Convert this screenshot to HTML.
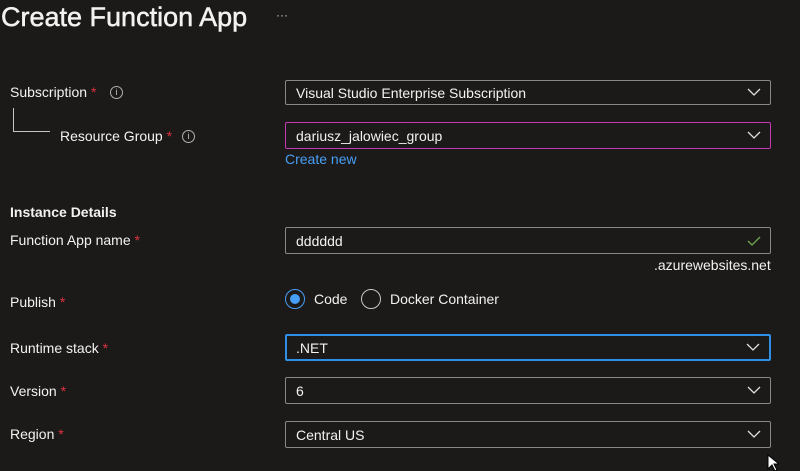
<!DOCTYPE html>
<html><head><style>
body{margin:0;width:800px;height:471px;background:#1b1a19;color:#f3f2f1;font-family:"Liberation Sans",sans-serif;font-size:14px;position:relative;overflow:hidden}
.a{position:absolute;white-space:nowrap}
.r{color:#e0313e}
.box{position:absolute;left:285px;width:486px;border:1px solid #8a8886;border-radius:2px;box-sizing:border-box}
.box span{position:absolute;left:10px;top:50%;transform:translateY(-50%)}
.chev{position:absolute;right:9px;top:50%;margin-top:-5px}
.info{position:absolute;width:11px;height:11px;border:1px solid #b3b0ad;border-radius:50%;font-size:9px;text-align:center;line-height:11px;color:#c8c6c4}
</style></head><body>
<div class="a" style="left:1px;top:2px;font-size:27px;-webkit-text-stroke:0.5px #f3f2f1">Create Function App</div>
<div class="a" style="left:276px;top:8px;font-size:12px;color:#c8c6c4">···</div>

<div class="a" style="left:10px;top:84px">Subscription <span class="r">*</span></div>
<div class="info" style="left:110px;top:86px">i</div>
<div class="a" style="left:13px;top:108px;width:36px;height:23px;border-left:1px solid #c8c6c4;border-bottom:1px solid #c8c6c4"></div>
<div class="a" style="left:60px;top:128px">Resource Group <span class="r">*</span></div>
<div class="info" style="left:182px;top:130px">i</div>

<div class="box" style="top:80px;height:25px"><span>Visual Studio Enterprise Subscription</span><svg class="chev" width="14" height="9"><path d="M1 1l6 6 6-6" stroke="#e1dfdd" fill="none" stroke-width="1.3"/></svg></div>
<div class="box" style="top:122px;height:27px;border-color:#c239b3"><span>dariusz_jalowiec_group</span><svg class="chev" width="14" height="9"><path d="M1 1l6 6 6-6" stroke="#e1dfdd" fill="none" stroke-width="1.3"/></svg></div>
<div class="a" style="left:285px;top:151px;color:#479ef5">Create new</div>

<div class="a" style="left:10px;top:204px;font-weight:bold">Instance Details</div>
<div class="a" style="left:10px;top:232px">Function App name <span class="r">*</span></div>
<div class="box" style="top:227px;height:27px"><span>dddddd</span><svg class="chev" width="14" height="10"><path d="M1 5l4 4 8-8" stroke="#6ea84a" fill="none" stroke-width="1.3"/></svg></div>
<div class="a" style="left:654px;top:257px">.azurewebsites.net</div>

<div class="a" style="left:10px;top:294px">Publish <span class="r">*</span></div>
<div class="a" style="left:285px;top:289px;width:20px;height:20px;border:1px solid #479ef5;border-radius:50%;box-sizing:border-box"><div style="position:absolute;left:4px;top:4px;width:10px;height:10px;border-radius:50%;background:#479ef5"></div></div>
<div class="a" style="left:314px;top:291px">Code</div>
<div class="a" style="left:361px;top:289px;width:20px;height:20px;border:1px solid #c8c6c4;border-radius:50%;box-sizing:border-box"></div>
<div class="a" style="left:390px;top:291px">Docker Container</div>

<div class="a" style="left:10px;top:340px">Runtime stack <span class="r">*</span></div>
<div class="box" style="top:334px;height:27px;border:2px solid #2d8fe6"><span style="left:9px">.NET</span><svg class="chev" width="14" height="9"><path d="M1 1l6 6 6-6" stroke="#e1dfdd" fill="none" stroke-width="1.3"/></svg></div>
<div class="a" style="left:10px;top:383px">Version <span class="r">*</span></div>
<div class="box" style="top:377px;height:27px"><span>6</span><svg class="chev" width="14" height="9"><path d="M1 1l6 6 6-6" stroke="#e1dfdd" fill="none" stroke-width="1.3"/></svg></div>
<div class="a" style="left:10px;top:426px">Region <span class="r">*</span></div>
<div class="box" style="top:421px;height:27px"><span>Central US</span><svg class="chev" width="14" height="9"><path d="M1 1l6 6 6-6" stroke="#e1dfdd" fill="none" stroke-width="1.3"/></svg></div>
<svg class="a" style="left:767px;top:454px" width="12" height="17"><path d="M1 1v14l4-4 3 6 2-1-3-6h5z" fill="#fff" stroke="#000" stroke-width="1"/></svg>
</body></html>
